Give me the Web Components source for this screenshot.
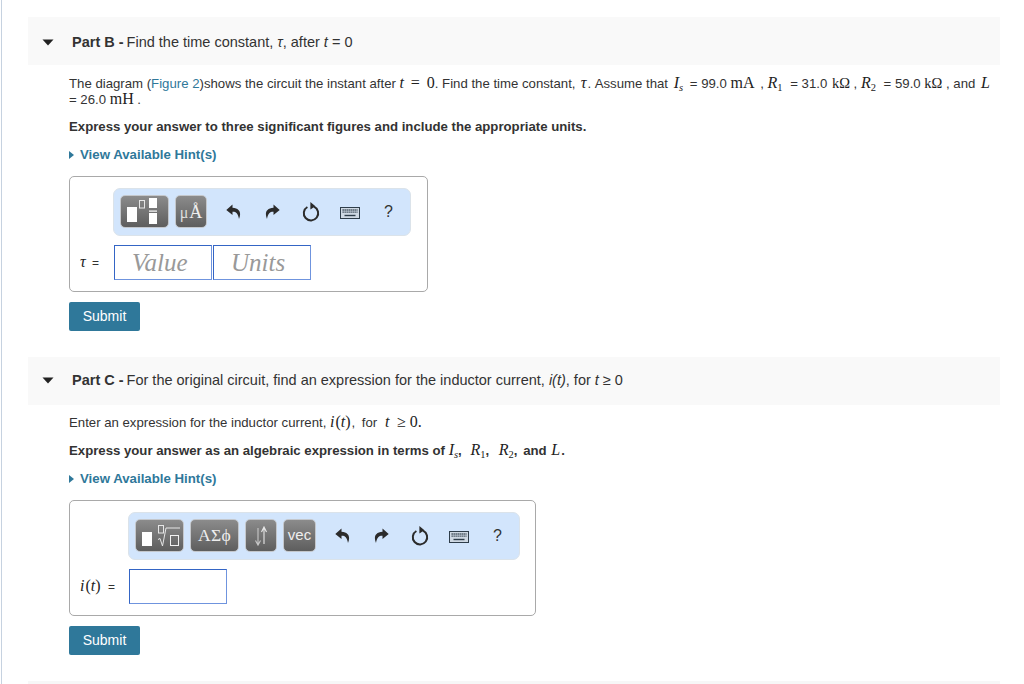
<!DOCTYPE html>
<html lang="en"><head><meta charset="utf-8"><title>Part B and C</title>
<style>
html,body{margin:0;padding:0;background:#fff;}
body{font:13.2px/16px "Liberation Sans",Arial,sans-serif;color:#333;}
</style></head><body>
<x-page>
  <x-part label="Part B -" top="17" shift="1" after="11">
    <span slot="title">Find the time constant, <i>τ</i>, after <i>t</i> = 0</span>
    <x-para>The diagram (<x-link>Figure 2</x-link>)shows the circuit the instant after <x-m i style="margin-right:3px">t</x-m> <x-m style="word-spacing:3px">= 0</x-m>. Find the time constant, <x-m i style="margin:0 1px 0 1.5px">τ</x-m>. Assume that <x-m i style="margin:0 3px 0 2px">I<sub>s</sub></x-m> = 99.0 <x-m style="margin-right:2px">mA</x-m> , <x-m i>R</x-m><x-m style="margin-right:4px"><sub>1</sub></x-m> = 31.0 <x-m style="font-size:14.5px;margin-left:1px">kΩ</x-m> , <x-m i>R</x-m><x-m style="margin-right:4px"><sub>2</sub></x-m> = 59.0 <x-m style="font-size:14.5px">kΩ</x-m> , and <x-m i style="margin-left:2px">L</x-m><br>= 26.0 <x-m>mH</x-m> .</x-para>
    <x-para bold gap="11">Express your answer to three significant figures and include the appropriate units.</x-para>
    <x-hint gap="12">View Available Hint(s)</x-hint>
    <x-answer gap="13" w="359" labelw="43">
      <x-toolbar slot="tools" w="298">
        <x-btn w="49" kind="templates"></x-btn>
        <x-btn w="32" kind="units" style="margin-left:6px"></x-btn>
        <x-actions style="margin-left:7px"></x-actions>
      </x-toolbar>
      <span slot="label"><x-m i style="margin-right:3px">τ</x-m> =</span>
      <x-field ph="Value"></x-field>
      <x-field ph="Units" style="margin-left:1px"></x-field>
    </x-answer>
    <x-submit gap="10">Submit</x-submit>
  </x-part>
  <x-part label="Part C -" top="26" shift="-1" after="10">
    <span slot="title">For the original circuit, find an expression for the inductor current, <i>i(t)</i>, for <i>t</i> ≥ 0</span>
    <x-para>Enter an expression for the inductor current, <x-m i style="margin-right:1px">i</x-m><x-m>(</x-m><x-m i>t</x-m><x-m style="margin-right:1px">)</x-m>, <span style="margin-left:3px">for</span> <x-m i style="margin:0 4px">t</x-m> <x-m>≥ 0.</x-m></x-para>
    <x-para bold gap="12">Express your answer as an algebraic expression in terms of <x-m i>I<sub>s</sub></x-m><span style="margin-right:5px">,</span> <x-m i>R</x-m><x-m><sub>1</sub></x-m><span style="margin-right:6px">,</span> <x-m i>R</x-m><x-m><sub>2</sub></x-m><span style="margin-right:2px">,</span> <span style="margin-right:1px">and</span> <x-m i style="margin-right:1px">L</x-m>.</x-para>
    <x-hint gap="12">View Available Hint(s)</x-hint>
    <x-answer gap="13" w="467" labelw="58">
      <x-toolbar slot="tools" w="392">
        <x-btn w="49" kind="radical"></x-btn>
        <x-btn w="49" kind="greek" style="margin-left:6px"></x-btn>
        <x-btn w="32" kind="arrows" style="margin-left:6px"></x-btn>
        <x-btn w="33" kind="vec" style="margin-left:6px"></x-btn>
        <x-actions style="margin-left:7px"></x-actions>
      </x-toolbar>
      <span slot="label"><x-m i style="margin-right:1px">i</x-m><x-m>(</x-m><x-m i>t</x-m><x-m style="margin-right:4px">)</x-m> =</span>
      <x-field ph=""></x-field>
    </x-answer>
    <x-submit gap="10">Submit</x-submit>
  </x-part>
  <x-nextbar></x-nextbar>
</x-page>
<script>
function shadow(el,html){const r=el.attachShadow({mode:'open'});r.innerHTML=html;return r;}
class XPage extends HTMLElement{constructor(){super();shadow(this,`<style>
:host{display:block;width:1023px;height:684px;box-sizing:border-box;overflow:hidden;margin-left:1px;border-left:1px solid #c6d2e0;padding:0 24px 0 26px;}
</style><slot></slot>`);}}
class XPart extends HTMLElement{constructor(){super();const t=this.getAttribute('top')||0,s=+this.getAttribute('shift')||0,a=this.getAttribute('after')||11;shadow(this,`<style>
:host{display:block;margin-top:${t}px;}
header{box-sizing:border-box;height:48px;background:#f9f9f9;display:flex;align-items:center;padding-left:14px;${s>0?`padding-top:${2*s}px;`:`padding-bottom:${-2*s}px;`}font-size:14.5px;color:#333;margin-bottom:${a}px;}
svg{width:12px;height:7px;flex:none;margin-right:18px;}
b{margin-right:3px;}
.body{padding-left:41px;}
</style><header><svg viewBox="0 0 12 7"><path d="M0.5 0.5H11.5L6 6.5Z" fill="#222"/></svg><b>${this.getAttribute('label')}</b><slot name="title"></slot></header><div class="body"><slot></slot></div>`);}}
class XPara extends HTMLElement{constructor(){super();const g=this.getAttribute('gap')||0;const b=this.hasAttribute('bold');shadow(this,`<style>
:host{display:block;margin-top:${g}px;font-size:13.2px;line-height:16px;height:auto;color:#333;${b?'font-weight:700;':''}}
</style><slot></slot>`);}}
class XLink extends HTMLElement{constructor(){super();shadow(this,`<style>:host{display:inline;color:#2f789a;}</style><slot></slot>`);}}
class XM extends HTMLElement{constructor(){super();const i=this.hasAttribute('i');shadow(this,`<style>
:host{display:inline;font-family:"Liberation Serif","Times New Roman",serif;font-size:16px;font-weight:400;font-style:${i?'italic':'normal'};color:#222;line-height:0;}
::slotted(sub){font-size:10.5px;line-height:0;vertical-align:-3px;}
</style><slot></slot>`);}}
class XHint extends HTMLElement{constructor(){super();const g=this.getAttribute('gap')||0;shadow(this,`<style>
:host{display:flex;align-items:center;margin-top:${g}px;font-size:13.25px;line-height:16px;font-weight:700;color:#2f789a;}
svg{width:5px;height:8px;margin-right:6px;flex:none;}
</style><svg viewBox="0 0 5 8"><path d="M0 0L5 4L0 8Z" fill="#2f789a"/></svg><slot></slot>`);}}
class XAnswer extends HTMLElement{constructor(){super();const g=this.getAttribute('gap')||0,w=this.getAttribute('w'),l=this.getAttribute('labelw');shadow(this,`<style>
:host{display:grid;grid-template-columns:${l}px auto;align-items:center;justify-items:start;row-gap:9px;box-sizing:border-box;width:${w}px;height:116px;margin-top:${g}px;padding:11px 0 0 0;border:1px solid #a9a9a9;border-radius:5px;align-content:start;}
.lab{padding-left:10px;white-space:nowrap;font-size:12px;color:#333;box-sizing:border-box;width:100%;}
.tools{grid-column:2;}
.fields{display:flex;grid-column:2;margin-left:1px;}
</style><div class="tools"><slot name="tools"></slot></div><div class="lab"><slot name="label"></slot></div><div class="fields"><slot></slot></div>`);}}
class XToolbar extends HTMLElement{constructor(){super();shadow(this,`<style>
:host{display:flex;align-items:flex-start;box-sizing:border-box;width:${this.getAttribute('w')}px;height:48px;padding:6px 0 0 6px;background:#d2e5fc;border:1px solid #dbe3ea;border-radius:7px;}
</style><slot></slot>`);}}
const W='fill="#fff"';
const GL={
 templates:`<svg width="47" height="31" viewBox="0 0 47 31"><rect x="6" y="11" width="10" height="15" ${W}/><rect x="18.5" y="4.5" width="5" height="7.5" fill="none" stroke="#e6e6e6"/><rect x="28" y="2" width="8" height="10" ${W}/><rect x="28" y="14.5" width="8" height="1.2" ${W}/><rect x="28" y="17" width="8" height="11" ${W}/></svg>`,
 radical:`<svg width="47" height="31" viewBox="0 0 47 31"><rect x="6" y="12" width="10" height="14" ${W}/><rect x="22.5" y="5.5" width="5" height="7.5" fill="none" stroke="#e6e6e6"/><path d="M22 19.5l2-1 2.5 7.5 3.5-18h14" fill="none" stroke="#e6e6e6" stroke-width="1"/><rect x="34.5" y="15.5" width="8" height="10" fill="none" stroke="#f2f2f2"/></svg>`,
 arrows:`<svg width="30" height="31" viewBox="0 0 30 31"><path d="M12 8V24M9.5 20.5L12 25L14.5 20.5" fill="none" stroke="#c8c8c8" stroke-width="1.1"/><path d="M18 24V8M15.5 12L18 7L20.5 12" fill="none" stroke="#e8e8e8" stroke-width="1.1"/></svg>`
};
class XBtn extends HTMLElement{constructor(){super();const k=this.getAttribute('kind');let c=GL[k]||'';
 if(k==='units')c='<span class="u"><small>μ</small>Å</span>';
 if(k==='greek')c='<span class="g">ΑΣϕ</span>';
 if(k==='vec')c='<span class="v">vec</span>';
 shadow(this,`<style>
:host{display:flex;align-items:center;justify-content:center;flex:none;box-sizing:border-box;width:${this.getAttribute('w')}px;height:33px;border:1px solid #c4c7cb;border-radius:5px;background:linear-gradient(#8b8b8b,#5e5e5e);overflow:hidden;}
span{color:#eee;white-space:nowrap;}
.u{font:18px "Liberation Serif",serif;margin-top:2px;}
.u small{font-size:16px;margin-right:1px;color:#ddd;}
.g{font:17.5px "Liberation Serif",serif;letter-spacing:.3px;margin-top:-1px;}
.v{font:15px "Liberation Sans",sans-serif;margin-top:-3px;}
svg{display:block;}
</style>${c}`);}}
class XActions extends HTMLElement{constructor(){super();shadow(this,`<style>
:host{display:flex;align-items:center;}
div{width:38.75px;height:33px;display:flex;align-items:center;justify-content:center;color:#333;font-size:16px;}
svg{display:block;}
</style>
<div><svg width="15" height="16" viewBox="0 0 15 16"><path d="M6.5 .5L.3 6 6.5 11V7.8C9.6 7.6 12 9 13 15 15.2 10 14.6 4.3 6.5 3.8Z" fill="#2b2b2b"/></svg></div>
<div><svg width="15" height="16" viewBox="0 0 15 16"><path d="M8.5 .5L14.7 6 8.5 11V7.8C5.4 7.6 3 9 2 15-.2 10 .4 4.3 8.5 3.8Z" fill="#2b2b2b"/></svg></div>
<div><svg width="18" height="20" viewBox="0 0 18 20" style="margin-top:1px"><path d="M5.4 5A7.2 7.2 0 1 0 12 4.7" fill="none" stroke="#2b2b2b" stroke-width="2"/><path d="M8.4 0L13.4 4.2L8.4 7.4Z" fill="#2b2b2b"/></svg></div>
<div><svg width="20" height="12" viewBox="0 0 20 12" style="margin-top:2px"><rect x=".5" y=".5" width="19" height="11" fill="#cfd9e4" stroke="#2e3d4a"/><path d="M2.5 3h15M2.5 5.2h15" stroke="#33424f" stroke-width="1.3" stroke-dasharray="1.3 .7"/><path d="M4.5 8.5h11" stroke="#2e3d4a" stroke-width="1.4"/></svg></div>
<div><span>?</span></div>`);}}
class XField extends HTMLElement{constructor(){super();const p=this.getAttribute('ph')||'';shadow(this,`<style>
:host{display:block;flex:none;box-sizing:border-box;width:98px;height:35px;padding-left:17px;border:1px solid #3465c5;border-bottom-color:#6f94de;border-right-color:#6f94de;background:#fff;font:italic 25px/33px "Liberation Serif",serif;color:#999;}
</style>${p}`);}}
class XSubmit extends HTMLElement{constructor(){super();const g=this.getAttribute('gap')||0;shadow(this,`<style>
:host{display:flex;align-items:center;justify-content:center;box-sizing:border-box;width:71px;height:29px;padding-bottom:2px;margin-top:${g}px;background:#2f789a;border-radius:2px;color:#fff;font-size:14px;}
</style><slot></slot>`);}}
class XNextbar extends HTMLElement{constructor(){super();shadow(this,`<style>
:host{display:block;height:3px;margin-top:26px;background:#f7f7f7;}
</style>`);}}
for(const [n,c] of Object.entries({'x-page':XPage,'x-part':XPart,'x-para':XPara,'x-link':XLink,'x-m':XM,'x-hint':XHint,'x-answer':XAnswer,'x-toolbar':XToolbar,'x-btn':XBtn,'x-actions':XActions,'x-field':XField,'x-submit':XSubmit,'x-nextbar':XNextbar}))customElements.define(n,c);
</script>
</body></html>
